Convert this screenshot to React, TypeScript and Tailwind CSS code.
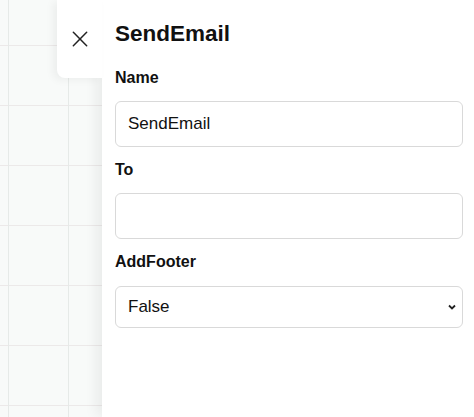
import React from 'react';

const fields = [
  { label: 'Name', value: 'SendEmail' },
  { label: 'To', value: '' },
];

const App: React.FC = () => {
  return (
    <div
      className="flex h-screen w-full overflow-hidden bg-[#f8faf9] bg-[linear-gradient(to_right,#e6eae8_1px,transparent_1px),linear-gradient(to_bottom,#ece9e9_1px,transparent_1px)] bg-[size:60px_60px] bg-[position:8px_45px] font-['Liberation_Sans',Arial,sans-serif] text-[#111]"
    >
      <div className="flex-1" />
      <aside className="relative w-[372px] bg-white px-[13px] pt-5 shadow-[-6px_0_12px_rgba(0,0,0,0.06)]">
        <button className="absolute right-full top-0 flex h-[78px] w-[45px] items-center justify-center rounded-bl-lg bg-white shadow-[-4px_2px_8px_rgba(0,0,0,0.05)]">
          <svg width="20" height="20" viewBox="0 0 24 24" fill="none" stroke="#222" strokeWidth="1.8" strokeLinecap="round">
            <path d="M4 4l16 16M20 4L4 20" />
          </svg>
        </button>

        <h2 className="text-[22.5px] font-bold leading-7">SendEmail</h2>

        <div className="mt-5 w-[348px]">
          {fields.map((f) => (
            <div key={f.label} className="mb-[13px]">
              <label className="block text-base font-bold leading-5">{f.label}</label>
              <input
                defaultValue={f.value}
                className="mt-[13px] block h-[46px] w-full rounded-md border border-[#d9d9d9] px-3 text-[17px] outline-none"
              />
            </div>
          ))}
          <label className="block text-base font-bold leading-5">AddFooter</label>
          <div className="relative mt-[14px]">
            <select className="block h-[42px] w-full appearance-none rounded-md border border-[#d9d9d9] bg-white px-3 text-[17px] outline-none">
              <option>False</option>
              <option>True</option>
            </select>
            <svg
              className="pointer-events-none absolute right-[6px] top-1/2 -translate-y-1/2"
              width="10"
              height="10"
              viewBox="0 0 10 10"
              fill="none"
              stroke="#222"
              strokeWidth="1.8"
            >
              <path d="M2 3.5l3 3 3-3" />
            </svg>
          </div>
        </div>
      </aside>
    </div>
  );
};

export default App;
